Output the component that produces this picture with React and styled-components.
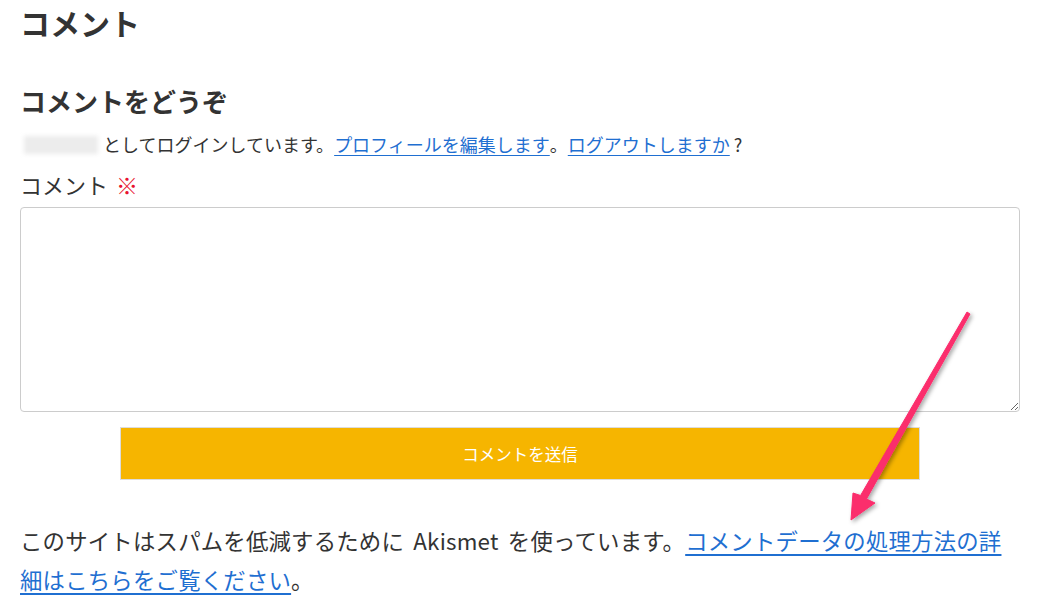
import React from "react";
import styled, { createGlobalStyle } from "styled-components";

const Global = createGlobalStyle`
  html, body { margin: 0; padding: 0; background: #fff; }
  body {
    font-family: "Noto Sans CJK JP", "Noto Sans", sans-serif;
    color: #333;
  }
`;

const Page = styled.div`
  position: relative;
  width: 1046px;
  height: 610px;
  overflow: hidden;
  box-sizing: border-box;
  padding: 4px 26px 0 20px;
`;

const Title = styled.h2`
  margin: 0;
  font-size: 30px;
  line-height: 36px;
  font-weight: 700;
  color: #333;
`;

const Subtitle = styled.h3`
  margin: 44px 0 0;
  font-size: 26px;
  line-height: 34px;
  font-weight: 700;
  color: #333;
`;

const LoggedIn = styled.p`
  margin: 13px 0 0;
  font-size: 18px;
  line-height: 27px;
  color: #333;
  display: flex;
  align-items: center;
  white-space: nowrap;
`;

const Blurred = styled.span`
  display: inline-block;
  width: 74px;
  height: 18px;
  margin: 0 5px 0 4px;
  background: #ececec;
  filter: blur(2px);
`;

const Link = styled.a`
  color: #1f6fd1;
  text-decoration: underline;
  text-underline-offset: ${(p) => (p.$thick ? "4px" : "3px")};
  text-decoration-thickness: ${(p) => (p.$thick ? "2px" : "1px")};
  cursor: pointer;
`;

const Label = styled.label`
  display: block;
  margin-top: 10px;
  font-size: 22px;
  line-height: 33px;
  color: #333;
`;

const Required = styled.span`
  color: #e8132f;
  margin-left: 8px;
`;

const TextArea = styled.textarea`
  display: block;
  box-sizing: border-box;
  width: 1000px;
  height: 205px;
  margin-top: 6px;
  border: 1px solid #ccc;
  border-radius: 4px;
  background: #fff;
  resize: vertical;
  font-family: inherit;
  outline: none;
`;

const Submit = styled.button`
  display: block;
  box-sizing: border-box;
  width: 800px;
  height: 53px;
  margin: 15px auto 0 100px;
  background: #f6b500;
  border: 1px solid #dcdcdc;
  color: #fff;
  font-family: "Noto Sans CJK JP", sans-serif;
  font-size: 16.5px;
  cursor: pointer;
`;

const Note = styled.p`
  margin: 41px 0 0;
  font-size: 22.4px;
  line-height: 39px;
  letter-spacing: 0.2px;
  word-spacing: 4px;
  color: #333;
  width: 1000px;
`;

const Overlay = styled.svg`
  position: absolute;
  left: 0;
  top: 0;
  pointer-events: none;
`;

function Arrow() {
  return (
    <Overlay width="1046" height="610" viewBox="0 0 1046 610">
      <defs>
        <filter id="sh" x="-50%" y="-50%" width="200%" height="200%">
          <feDropShadow dx="2" dy="2" stdDeviation="2" floodColor="#000" floodOpacity="0.35" />
        </filter>
      </defs>
      <polygon
        points="967,312 970,314 866.5,499 875,503 851,520 853,493 860.5,495.5"
        fill="#fb2d6c"
        strokeLinejoin="round"
        stroke="#fb2d6c"
        strokeWidth="1"
        filter="url(#sh)"
      />
    </Overlay>
  );
}

export default function App() {
  return (
    <>
      <Global />
      <Page>
        <Title>コメント</Title>
        <Subtitle>コメントをどうぞ</Subtitle>
        <LoggedIn>
          <Blurred />
          としてログインしています。
          <Link>プロフィールを編集します</Link>。
          <Link>ログアウトしますか</Link>&nbsp;?
        </LoggedIn>
        <Label>
          コメント<Required>※</Required>
        </Label>
        <TextArea />
        <Submit>コメントを送信</Submit>
        <Note>
          このサイトはスパムを低減するために Akismet を使っています。
          <Link $thick>コメントデータの処理方法の詳細はこちらをご覧ください</Link>。
        </Note>
        <Arrow />
      </Page>
    </>
  );
}
